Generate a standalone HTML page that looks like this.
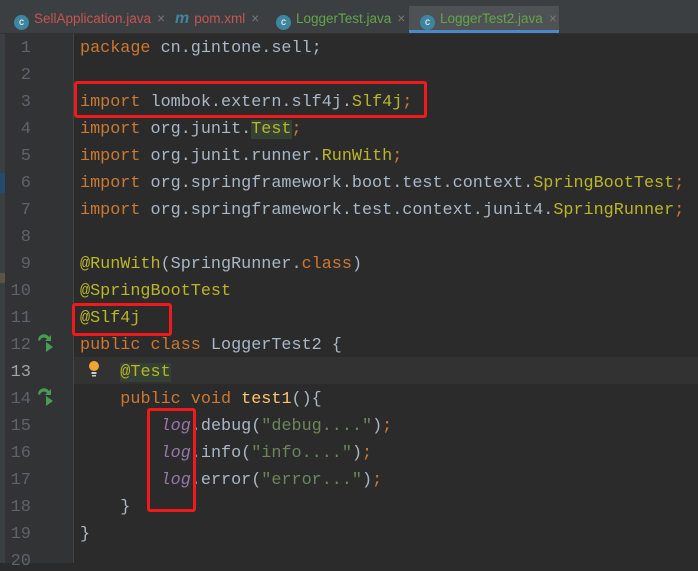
<!DOCTYPE html><html><head><style>
body{margin:0;width:698px;height:563px;background:#2b2b2b;overflow:hidden;position:relative;font-family:"Liberation Mono",monospace}
.top{position:absolute;left:0;top:0;width:698px;height:6px;background:#3c3f41}
.tabs{position:absolute;left:0;top:6px;width:698px;height:27px;background:#3c3f41;border-bottom:1px solid #323232;font-family:"Liberation Sans",sans-serif;font-size:13.5px}
.tab{position:absolute;top:0;height:27px;line-height:26px;white-space:nowrap}
.ic{display:inline-block;width:15px;height:15px;border-radius:50%;background:#3e86a0;color:#fff;font-size:10px;line-height:15px;text-align:center;vertical-align:-2px;margin-right:5px}
.x{color:#777;margin-left:6px}
.strip{position:absolute;left:0;top:34px;width:5px;height:529px;background:#3c3f41}
.gut{position:absolute;left:5px;top:34px;width:68px;height:529px;background:#313335;border-right:1px solid #444}
.ln{position:absolute;left:5px;width:26px;text-align:right;color:#606366;font-size:17px}
.code{position:absolute;left:80px;white-space:pre;font-size:16.8px;color:#a9b7c6}
.k{color:#cc7832}.a{color:#bbb529}.s{color:#6a8759}.l{color:#9876aa;font-style:italic}.t{background:#344134}
.box{position:absolute;border:3px solid #f01a1a;border-radius:3px}
</style></head><body>
<div class="top"></div>
<div class="tabs">
<div class="tab" style="left:14px;color:#c75450"><span class="ic">c</span>SellApplication.java<span class="x">×</span></div>
<div class="tab" style="left:175px;color:#c75450"><b style="color:#3e86a0;font-style:italic;font-size:16px;margin-right:5px">m</b>pom.xml<span class="x">×</span></div>
<div class="tab" style="left:276px;color:#62a64a"><span class="ic">c</span>LoggerTest.java<span class="x">×</span></div>
<div class="tab" style="left:409px;width:150px;background:#4e5254;padding-left:11px;box-sizing:border-box;color:#62a64a;border-bottom:3px solid #4a88c7;height:27px"><span class="ic">c</span>LoggerTest2.java<span class="x">×</span></div>
</div>
<div class="strip"><div style="position:absolute;top:139px;width:5px;height:20px;background:#264a6b"></div><div style="position:absolute;top:239px;width:5px;height:10px;background:#5a5546"></div></div>
<div class="gut"></div>
<div style="position:absolute;left:74px;top:357px;width:624px;height:27px;background:#323232"></div>
<div id="L"></div>
<script>
var lines=[
'<span class="k">package</span> cn.gintone.sell;','',
'<span class="k">import</span> lombok.extern.slf4j.<span class="a">Slf4j</span><span class="k">;</span>',
'<span class="k">import</span> org.junit.<span class="a t">Test</span><span class="k">;</span>',
'<span class="k">import</span> org.junit.runner.<span class="a">RunWith</span><span class="k">;</span>',
'<span class="k">import</span> org.springframework.boot.test.context.<span class="a">SpringBootTest</span><span class="k">;</span>',
'<span class="k">import</span> org.springframework.test.context.junit4.<span class="a">SpringRunner</span><span class="k">;</span>','',
'<span class="a">@RunWith</span>(SpringRunner.<span class="k">class</span>)',
'<span class="a">@SpringBootTest</span>','<span class="a">@Slf4j</span>',
'<span class="k">public class</span> LoggerTest2 {',
'    <span class="a t">@Test</span>',
'    <span class="k">public void</span> <span style="color:#ffc66d">test1</span>(){',
'        <span class="l">log</span>.debug(<span class="s">"debug...."</span>)<span class="k">;</span>',
'        <span class="l">log</span>.info(<span class="s">"info...."</span>)<span class="k">;</span>',
'        <span class="l">log</span>.error(<span class="s">"error..."</span>)<span class="k">;</span>',
'    }','}',''];
var h='';
for(var i=0;i<20;i++){var y=34+27*i;
h+='<div class="ln" style="top:'+(y+5)+'px;'+(i==12?'color:#a4a3a3':'')+'">'+(i+1)+'</div>';
h+='<div class="code" style="top:'+(y+5)+'px">'+lines[i]+'</div>';}
document.getElementById('L').innerHTML=h;
</script>
<svg style="position:absolute;left:36px;top:334px" width="20" height="80"><g fill="#499c54"><path d="M2 6a6 6 0 0 1 11-3l2-2v6h-6l2-2a4 4 0 0 0-7 2z"/><path d="M10 8l7 5-7 5z"/><path d="M2 60a6 6 0 0 1 11-3l2-2v6h-6l2-2a4 4 0 0 0-7 2z"/><path d="M10 62l7 5-7 5z"/></g></svg>
<svg style="position:absolute;left:87px;top:360px" width="14" height="18"><circle cx="7" cy="6" r="5" fill="#f0a732"/><rect x="4.5" y="12" width="5" height="2" fill="#ccc"/><rect x="5" y="15" width="4" height="1.5" fill="#ccc"/></svg>
<div class="box" style="left:74px;top:81px;width:347px;height:31px"></div>
<div class="box" style="left:72px;top:303px;width:94px;height:27px"></div>
<div class="box" style="left:147px;top:408px;width:43px;height:98px"></div>
</body></html>
